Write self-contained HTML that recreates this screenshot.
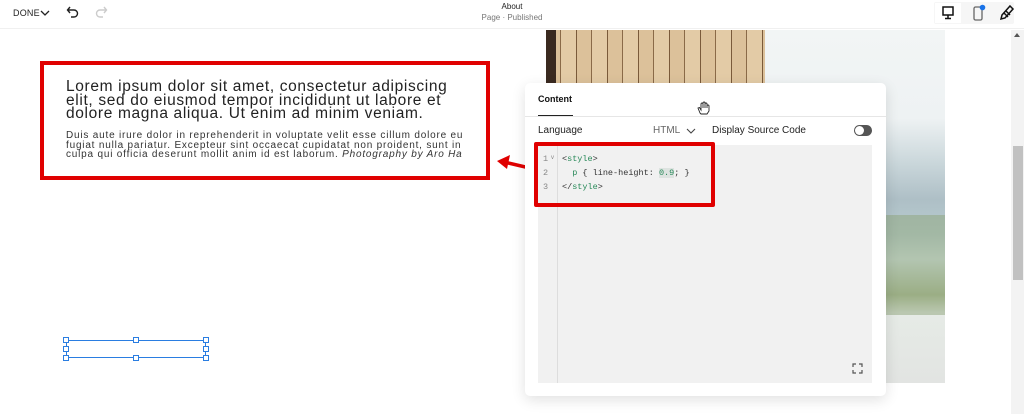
<!DOCTYPE html>
<html><head><meta charset="utf-8"><style>
*{margin:0;padding:0;box-sizing:border-box}
body{width:1024px;height:414px;overflow:hidden;background:#fff;font-family:"Liberation Sans",sans-serif;position:relative}
.abs{position:absolute}
</style></head><body>
<div class="abs" style="left:0;top:0;width:1024px;height:29px;background:#fff;border-bottom:1px solid #f0f0f0"></div>
<div class="abs" style="left:13px;top:8px;font-size:9px;color:#222;letter-spacing:.2px">DONE</div>
<svg class="abs" style="left:40px;top:9px" width="10" height="8"><path d="M1 2 L5 6 L9 2" stroke="#222" stroke-width="1.3" fill="none"/></svg>
<svg class="abs" style="left:66px;top:5px" width="14" height="14"><path d="M4 2 L1.5 5 L4 8 M1.5 5 H8 A3.5 3.5 0 0 1 8 12 H5" stroke="#222" stroke-width="1.4" fill="none"/></svg>
<svg class="abs" style="left:94px;top:5px" width="14" height="14"><path d="M10 2 L12.5 5 L10 8 M12.5 5 H6 A3.5 3.5 0 0 0 6 12 H9" stroke="#ccc" stroke-width="1.4" fill="none"/></svg>
<div class="abs" style="left:0;width:1024px;top:2px;text-align:center;font-size:8px;color:#222">About</div>
<div class="abs" style="left:0;width:1024px;top:13px;text-align:center;font-size:8px;color:#777">Page · Published</div>
<div class="abs" style="left:934px;top:2px;width:80px;height:22px;background:#f6f6f6;border-radius:2px"></div>
<div class="abs" style="left:935px;top:3px;width:26px;height:20px;background:#fff"></div>
<svg class="abs" style="left:942px;top:6px" width="12" height="14"><rect x="1" y="1" width="10" height="8" stroke="#111" stroke-width="1.5" fill="none"/><path d="M6 9 V12 M3 12.5 H9" stroke="#111" stroke-width="1.5"/></svg>
<svg class="abs" style="left:972px;top:4px" width="14" height="18"><rect x="2" y="3" width="8" height="13" rx="1.5" stroke="#666" stroke-width="1.3" fill="none"/><circle cx="10.5" cy="3.5" r="2.8" fill="#1a73e8"/></svg>
<svg class="abs" style="left:999px;top:4px" width="16" height="18"><path d="M11 2 L14 5 L6 14 L2 15 L3 11 Z M5 9 L9 13 M7 7 L11 11" stroke="#111" stroke-width="1.5" fill="none"/></svg>
<div class="abs" style="left:546px;top:30px;width:219px;height:353px;background:repeating-linear-gradient(90deg,#dcc19a 0 14px,#8a6a48 14px 15px,#e3cba6 15px 30px,#7a5a3a 30px 31px);"></div>
<div class="abs" style="left:546px;top:30px;width:10px;height:353px;background:#3a2a20"></div>
<div class="abs" style="left:765px;top:30px;width:180px;height:353px;background:linear-gradient(180deg,#f2f5f5 0,#eef2f3 25%,#c9d6da 38%,#aebfc6 48%,#b8cdd0 58%,#d8e7e8 65%,#a8b890 75%,#e6ebe6 80%,#e2e4e2 100%)"></div>
<div class="abs" style="left:885px;top:215px;width:60px;height:100px;background:#8ea47a;opacity:.5"></div>
<div class="abs" style="left:1011px;top:30px;width:13px;height:384px;background:#f3f3f3"></div>
<div class="abs" style="left:1013px;top:146px;width:10px;height:134px;background:#c1c1c1"></div>
<div class="abs" style="left:1014px;top:33px;width:0;height:0;border-left:3px solid transparent;border-right:3px solid transparent;border-bottom:4px solid #555"></div>
<div class="abs" style="left:40px;top:61px;width:450px;height:119px;border:4px solid #e00000"></div>
<div class="abs" style="left:66px;top:80px;font-size:15.5px;line-height:13.5px;letter-spacing:.65px;color:#222;white-space:nowrap">Lorem ipsum dolor sit amet, consectetur adipiscing<br>elit, sed do eiusmod tempor incididunt ut labore et<br>dolore magna aliqua. Ut enim ad minim veniam.</div>
<div class="abs" style="left:66px;top:131px;font-size:10px;line-height:9.5px;letter-spacing:.8px;color:#333;white-space:nowrap">Duis aute irure dolor in reprehenderit in voluptate velit esse cillum dolore eu<br>fugiat nulla pariatur. Excepteur sint occaecat cupidatat non proident, sunt in<br>culpa qui officia deserunt mollit anim id est laborum. <i>Photography by Aro Ha</i></div>
<svg class="abs" style="left:490px;top:150px" width="50" height="30"><path d="M44 19 L14 12" stroke="#e00000" stroke-width="3.5"/><path d="M7 11 L20 5 L17 19 Z" fill="#e00000"/></svg>
<div class="abs" style="left:66px;top:340px;width:140px;height:18px;border:1.5px solid #2a7de1"></div>
<div class="abs" style="left:63px;top:337px;width:6px;height:6px;border:1px solid #2a7de1;background:#fff"></div>
<div class="abs" style="left:133px;top:337px;width:6px;height:6px;border:1px solid #2a7de1;background:#fff"></div>
<div class="abs" style="left:203px;top:337px;width:6px;height:6px;border:1px solid #2a7de1;background:#fff"></div>
<div class="abs" style="left:63px;top:346px;width:6px;height:6px;border:1px solid #2a7de1;background:#fff"></div>
<div class="abs" style="left:203px;top:346px;width:6px;height:6px;border:1px solid #2a7de1;background:#fff"></div>
<div class="abs" style="left:63px;top:355px;width:6px;height:6px;border:1px solid #2a7de1;background:#fff"></div>
<div class="abs" style="left:133px;top:355px;width:6px;height:6px;border:1px solid #2a7de1;background:#fff"></div>
<div class="abs" style="left:203px;top:355px;width:6px;height:6px;border:1px solid #2a7de1;background:#fff"></div>
<div class="abs" style="left:525px;top:83px;width:361px;height:313px;background:#fff;border-radius:5px;box-shadow:0 4px 14px rgba(0,0,0,.12)"></div>
<div class="abs" style="left:538px;top:94px;font-size:9px;font-weight:bold;color:#111">Content</div>
<div class="abs" style="left:538px;top:115px;width:35px;height:1.5px;background:#222"></div>
<div class="abs" style="left:525px;top:116px;width:361px;height:1px;background:#e6e6e6"></div>
<div class="abs" style="left:538px;top:125px;font-size:10px;color:#222">Language</div>
<div class="abs" style="left:653px;top:125px;font-size:10px;color:#666">HTML</div>
<svg class="abs" style="left:686px;top:127px" width="10" height="8"><path d="M1 2 L5 6 L9 2" stroke="#444" stroke-width="1.1" fill="none"/></svg>
<div class="abs" style="left:712px;top:125px;font-size:10px;color:#222">Display Source Code</div>
<div class="abs" style="left:854px;top:125px;width:18px;height:11px;border-radius:6px;background:#555"></div>
<div class="abs" style="left:855px;top:126px;width:9px;height:9px;border-radius:50%;background:#fff"></div>
<div class="abs" style="left:538px;top:145px;width:334px;height:238px;background:#f1f1f1"></div>
<div class="abs" style="left:557px;top:145px;width:1px;height:238px;background:#ddd"></div>
<div class="abs" style="left:543px;top:152px;font-family:'Liberation Mono',monospace;font-size:8.5px;line-height:14px;color:#888">1<br>2<br>3</div>
<div class="abs" style="left:551px;top:155px;font-size:6px;color:#888">v</div>
<div class="abs" style="left:562px;top:152px;font-family:'Liberation Mono',monospace;font-size:8.5px;line-height:14px;color:#333;white-space:pre">&lt;<span style="color:#2a8a5a">style</span>&gt;
  <span style="color:#2a8a5a">p</span> { line-height: <span style="background:#dde3e0;color:#2a8a5a">0.9</span>; }
&lt;/<span style="color:#2a8a5a">style</span>&gt;</div>
<div class="abs" style="left:534px;top:142px;width:181px;height:65px;border:4px solid #e00000;border-radius:2px"></div>
<svg class="abs" style="left:852px;top:363px" width="11" height="11"><path d="M1 4 V1 H4 M7 1 H10 V4 M10 7 V10 H7 M4 10 H1 V7" stroke="#555" stroke-width="1.2" fill="none"/></svg>
<svg class="abs" style="left:696px;top:101px" width="14" height="14"><path d="M4 12 L2 7 L3.5 6.5 L5 9 V3 A1 1 0 0 1 7 3 V7 V2 A1 1 0 0 1 9 2 V7 V3 A1 1 0 0 1 11 3 V7 V5 A1 1 0 0 1 13 5 V10 L11 13 H5 Z" stroke="#222" stroke-width="0.9" fill="#fff"/></svg>
</body></html>
